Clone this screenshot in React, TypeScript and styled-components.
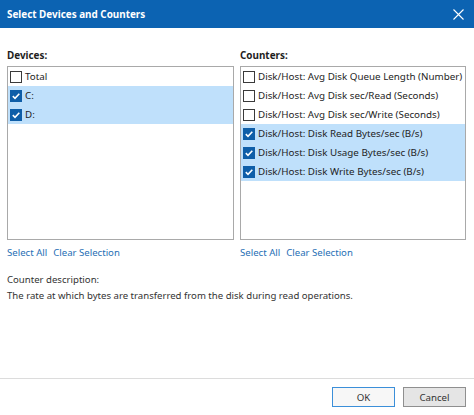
import React from "react";
import styled, { createGlobalStyle } from "styled-components";

const GlobalStyle = createGlobalStyle`
  html, body {
    margin: 0;
    padding: 0;
    background: #ffffff;
  }
  body {
    font-family: "Noto Sans", "Open Sans", sans-serif;
    font-size: 9.6px;
    color: #1e1e1e;
  }
`;

interface Item {
  name: string;
  checked: boolean;
}

const devices: Item[] = [
  { name: "Total", checked: false },
  { name: "C:", checked: true },
  { name: "D:", checked: true },
];

const counters: Item[] = [
  { name: "Disk/Host: Avg Disk Queue Length (Number)", checked: false },
  { name: "Disk/Host: Avg Disk sec/Read (Seconds)", checked: false },
  { name: "Disk/Host: Avg Disk sec/Write (Seconds)", checked: false },
  { name: "Disk/Host: Disk Read Bytes/sec (B/s)", checked: true },
  { name: "Disk/Host: Disk Usage Bytes/sec (B/s)", checked: true },
  { name: "Disk/Host: Disk Write Bytes/sec (B/s)", checked: true },
];

function CheckBox({ checked }: { checked: boolean }) {
  return (
    <Box $checked={checked}>
      {checked && (
        <svg width="10" height="10" viewBox="0 0 10 10">
          <path
            d="M1.8 5.2 L4 7.3 L8.3 2.8"
            fill="none"
            stroke="#ffffff"
            strokeWidth="1.6"
          />
        </svg>
      )}
    </Box>
  );
}

function Column({ title, items }: { title: string; items: Item[] }) {
  return (
    <Col>
      <Label>{title}</Label>
      <ListBox>
        {items.map((item, index) => (
          <Row key={index} $selected={item.checked}>
            <CheckBox checked={item.checked} />
            <span>{item.name}</span>
          </Row>
        ))}
      </ListBox>
      <Links>
        <LinkText>Select All</LinkText>
        <LinkText>Clear Selection</LinkText>
      </Links>
    </Col>
  );
}

export default function App() {
  return (
    <>
      <GlobalStyle />
      <Window>
        <TitleBar>
          <Title>Select Devices and Counters</Title>
          <svg width="11" height="11" viewBox="0 0 11 11">
            <path d="M0.5 0.5 L10.5 10.5 M10.5 0.5 L0.5 10.5" stroke="#ffffff" strokeWidth="1.1" />
          </svg>
        </TitleBar>
        <Body>
          <Columns>
            <Column title="Devices:" items={devices} />
            <Column title="Counters:" items={counters} />
          </Columns>
          <Description>
            <div>Counter description:</div>
            <div>The rate at which bytes are transferred from the disk during read operations.</div>
          </Description>
        </Body>
        <Footer>
          <Button $primary>OK</Button>
          <Button>Cancel</Button>
        </Footer>
      </Window>
    </>
  );
}

const Window = styled.div`
  width: 474px;
  height: 415px;
  display: flex;
  flex-direction: column;
  background: #ffffff;
  overflow: hidden;
`;

const TitleBar = styled.div`
  height: 28px;
  flex-shrink: 0;
  background: #0c63b2;
  display: flex;
  align-items: center;
  justify-content: space-between;
  padding: 0 10px 0 7px;
  svg {
    margin-top: 1px;
  }
`;

const Title = styled.div`
  color: #ffffff;
  font-weight: 700;
  font-size: 9.9px;
`;

const Body = styled.div`
  flex: 1;
  padding: 19px 8px 0 7px;
`;

const Columns = styled.div`
  display: grid;
  grid-template-columns: 227px 226px;
  gap: 6px;
`;

const Col = styled.div`
  display: flex;
  flex-direction: column;
`;

const Label = styled.div`
  font-weight: 700;
  font-size: 9.9px;
  line-height: 16px;
  margin-bottom: 3px;
`;

const ListBox = styled.div`
  height: 172px;
  border: 1px solid #a9a9a9;
  display: flex;
  flex-direction: column;
`;

const Row = styled.div<{ $selected: boolean }>`
  height: 19px;
  display: flex;
  align-items: center;
  gap: 3px;
  padding-left: 2px;
  font-size: 9.8px;
  background: ${(p) => (p.$selected ? "#bfe0fb" : "transparent")};
  white-space: nowrap;
`;

const Box = styled.div<{ $checked: boolean }>`
  width: 12px;
  height: 12px;
  box-sizing: border-box;
  border: 1px solid ${(p) => (p.$checked ? "#0e5ea8" : "#3a3a3a")};
  background: ${(p) => (p.$checked ? "#0e5ea8" : "#ffffff")};
  display: flex;
  align-items: center;
  justify-content: center;
  flex-shrink: 0;
`;

const Links = styled.div`
  display: flex;
  gap: 6px;
  margin-top: 5px;
  line-height: 16px;
`;

const LinkText = styled.span`
  color: #1f6fb5;
  cursor: pointer;
`;

const Description = styled.div`
  margin-top: 11px;
  line-height: 16px;
  color: #333333;
`;

const Footer = styled.div`
  box-sizing: border-box;
  height: 37px;
  flex-shrink: 0;
  border-top: 1px solid #dcdcdc;
  display: flex;
  justify-content: flex-end;
  align-items: flex-start;
  gap: 8px;
  padding: 8px 8px 0 0;
`;

const Button = styled.button<{ $primary?: boolean }>`
  width: 63px;
  height: 20px;
  font-family: "Noto Sans", "Open Sans", sans-serif;
  font-size: 9.7px;
  color: #333333;
  background: ${(p) => (p.$primary ? "#f7f7f7" : "#e5e5e5")};
  border: 1px solid ${(p) => (p.$primary ? "#3b8fd9" : "#8f8f8f")};
  padding: 0;
`;
